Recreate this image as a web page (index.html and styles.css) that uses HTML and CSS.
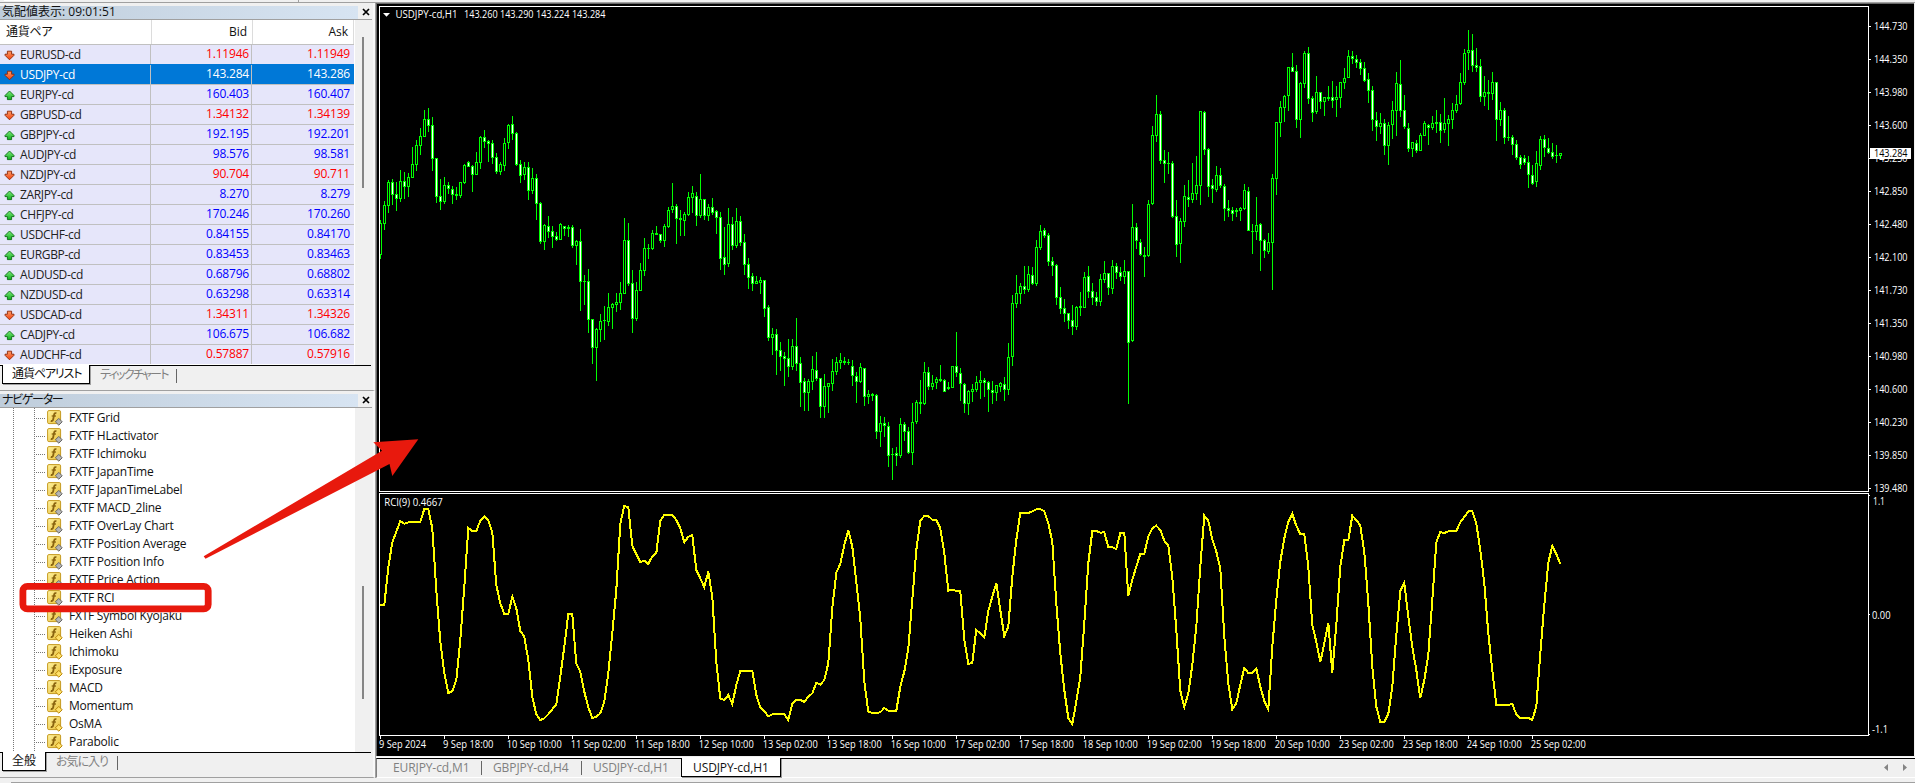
FILE: index.html
```html
<!DOCTYPE html>
<html lang="ja">
<head>
<meta charset="utf-8">
<title>USDJPY-cd,H1</title>
<link rel="stylesheet" href="styles.css">
</head>
<body>
<div class="app">
  <div class="toolbar-edge"><span class="edge-light"></span><span class="edge-split"></span></div>
  <div class="workspace">
    <aside class="sidebar">
      <section class="dock market">
        <header class="dock-title"><span class="dock-name">気配値表示: 09:01:51</span><svg class="close" viewBox="0 0 8 8"><path d="M1 1L7 7M7 1L1 7"/></svg></header>
        <div class="dock-body">
          <div class="quotes">
            <div class="quote-head"><span class="jp">通貨ペア</span><span>Bid</span><span>Ask</span></div>
            <div id="quotes"></div>
          </div>
          <div class="scroll"><i class="thumb thumb-market"></i></div>
        </div>
        <nav class="tabs"><span class="tab active tab-list">通貨ペアリスト</span><span class="tab tab-tick">ティックチャート</span></nav>
      </section>
      <section class="dock navigator">
        <header class="dock-title"><span class="dock-name nav-name">ナビゲーター</span><svg class="close" viewBox="0 0 8 8"><path d="M1 1L7 7M7 1L1 7"/></svg></header>
        <div class="dock-body">
          <div class="tree" id="tree"></div>
          <div class="scroll"><i class="thumb thumb-nav"></i></div>
        </div>
        <nav class="tabs"><span class="tab active tab-all">全般</span><span class="tab tab-fav">お気に入り</span></nav>
      </section>
    </aside>
    <main class="charts">
      <svg class="chart" id="chart" viewBox="377 4 1537 752" width="1537" height="752"></svg>
      <nav class="chart-tabs">
        <span class="ctab">EURJPY-cd,M1</span><span class="ctab">GBPJPY-cd,H4</span><span class="ctab last">USDJPY-cd,H1</span><span class="ctab current">USDJPY-cd,H1</span>
        <svg class="tab-arrows" viewBox="0 0 24 8"><path d="M4 0V7L0 3.5ZM19 0V7L23 3.5Z"/></svg>
      </nav>
    </main>
  </div>
  <div class="status-edge"></div>
  <svg class="callout" viewBox="0 0 430 783" width="430" height="783">
    <rect x="22.9" y="586.3" width="185.3" height="22.6" rx="4.5"/>
    <path d="M203.7 556.3L382 450.7L373.3 442.3L418.3 439.3L392.3 476L389.5 464L205.5 558.8Z"/>
  </svg>
</div>
<svg class="defs" width="0" height="0">
  <defs>
    <linearGradient id="gUp" x1="0" x2="0" y1="0" y2="1"><stop offset="0" stop-color="#7fe87c"/><stop offset="1" stop-color="#0fb01c"/></linearGradient>
    <linearGradient id="gDown" x1="0" x2="0" y1="0" y2="1"><stop offset="0" stop-color="#ff9a64"/><stop offset="1" stop-color="#f04010"/></linearGradient>
    <linearGradient id="gFx" x1="0" x2="1" y1="0" y2="1"><stop offset="0" stop-color="#fff3a0"/><stop offset="1" stop-color="#e9bf36"/></linearGradient>
    <symbol id="up" viewBox="0 0 12 11"><path d="M5.5 1L10 5.5V6.6H7.6V9.6H3.4V6.6H1V5.5Z" fill="url(#gUp)" stroke="#0b6b14" stroke-width=".9"/></symbol>
    <symbol id="down" viewBox="0 0 12 11"><path d="M5.5 9.8L10 5.3V4.2H7.6V1.2H3.4V4.2H1V5.3Z" fill="url(#gDown)" stroke="#8c2607" stroke-width=".9"/></symbol>
    <symbol id="fx" viewBox="0 0 16 16"><rect x=".6" y=".6" width="13" height="13" rx="1.3" fill="url(#gFx)" stroke="#c59a22"/><path d="M9.4 3.4C8.1 2.8 7.4 3.4 7.1 4.8L6.2 9.3C5.9 10.9 5.1 11.3 3.8 10.8" fill="none" stroke="#8a6410" stroke-width="1.8"/><path d="M4.7 6H9" stroke="#8a6410" stroke-width="1.3"/></symbol>
  </defs>
</svg>
<script src="app.js"></script>
</body>
</html>
```

FILE: styles.css
```css
* { box-sizing: border-box; }
body { margin: 0; background: #f0f0f0; color: #111; font: 12px "Open Sans", "Noto Sans CJK JP", sans-serif; overflow: hidden; }
.app { position: relative; width: 1915px; height: 783px; display: flex; flex-direction: column; }
.toolbar-edge { height: 3px; flex: none; display: flex; border-bottom: 1px solid #a0a0a0; }
.edge-light { width: 26px; height: 1px; margin-left: 4px; background: #fff; }
.edge-split { width: 1px; margin-left: 268px; background: #a0a0a0; }
.workspace { display: flex; height: 775px; flex: none; }

.sidebar { width: 375px; flex: none; display: flex; flex-direction: column; }
.dock { display: flex; flex-direction: column; width: 375px; border-right: 2px solid #f8f8f8; border-bottom: 1px solid #a0a0a0; }
.market { height: 388px; padding-top: 2px; }
.navigator { height: 387px; padding-top: 2px; }
.dock-title { height: 15px; flex: none; display: flex; align-items: center; justify-content: space-between; padding-right: 2px; border-bottom: 1px solid #a0a0a0; margin-right: 1px; }
.dock-name { width: 358px; height: 13px; line-height: 12px; padding-left: 2px; background: linear-gradient(90deg, #bfcddb, #d7e4f2); white-space: nowrap; }
.nav-name { font-feature-settings: "palt"; letter-spacing: -1.3px; }
.close { width: 8px; height: 8px; fill: none; stroke: #000; stroke-width: 1.7; }
.dock-body { display: flex; background: #fff; }
.market .dock-body { height: 345px; }
.navigator .dock-body { height: 344px; }
.quotes { width: 354px; }
.quote-head, .quote { display: grid; grid-template-columns: 150px 101px 103px; }
.quote-head { height: 24px; line-height: 23px; grid-template-columns: 152px 101px 101px; }
.quote-head span { border-right: 1px solid #dcdcdc; padding-right: 5px; text-align: right; }
.quote-head .jp { text-align: left; padding-left: 6px; font-feature-settings: "palt"; letter-spacing: -.3px; }
.quote { height: 20px; line-height: 17px; background: #e6e6fa; border-top: 1px solid #c0c0c0; }
.quote span { text-align: right; padding-right: 2px; border-left: 1px solid #c0c0c0; letter-spacing: -.2px; }
.quote span:last-child { padding-right: 4px; }
.quote .pair { display: flex; align-items: center; gap: 4px; padding-left: 4px; text-align: left; border: 0; letter-spacing: -.35px; }
.quote svg { width: 12px; height: 11px; margin-top: 1px; }
.rise { color: #00f; }
.fall { color: #f00; }
.pair { color: #222; }
.quote.picked { background: #0078d7; border-top-color: #0078d7; }
.picked span { color: #fff; }
.scroll { width: 18px; margin-left: 1px; background: #f0f0f0; }
.thumb { display: block; width: 2px; margin-left: 7px; background: #858585; }
.thumb-market { height: 151px; margin-top: 17px; }
.thumb-nav { height: 113px; margin-top: 178px; }
.tabs { height: 20px; margin-right: 2px; border-top: 1px solid #000; display: flex; }
.tab { color: #808080; height: 14px; margin-top: 3px; line-height: 12px; border-right: 1px solid #666; font-feature-settings: "palt"; white-space: nowrap; }
.tab.active { height: 19px; line-height: 17px; margin: -1px 0 0 2px; color: #111; background: #fff; border: 1px solid #000; border-top: 0; box-shadow: 1px 1px #a0a0a0; padding-left: 9px; }
.tab-list { width: 88px; letter-spacing: -1.1px; }
.tab-tick { width: 87px; padding-left: 10px; letter-spacing: -1.7px; }
.tab-all { width: 44px; }
.tab-fav { width: 72px; padding-left: 10px; letter-spacing: -1px; }

.tree { width: 354px; background-image: linear-gradient(#777 50%, transparent 50%), linear-gradient(#777 50%, transparent 50%); background-size: 1px 2px; background-position: 13px 0, 34px 0; background-repeat: repeat-y; }
.node { height: 18px; display: flex; align-items: center; padding-left: 34px; line-height: 17px; letter-spacing: -.24px; }
.node::before { content: ""; width: 11px; height: 1px; margin-top: 3px; background: repeating-linear-gradient(90deg, #777 0 1px, transparent 1px 2px); }
.node svg { width: 16px; height: 16px; margin: 2px 6px 0 2px; }

.charts { width: 1540px; border-left: 1px solid #a0a0a0; display: flex; flex-direction: column; }
.chart { display: block; flex: none; background: #000; border-left: 1px solid #696969; border-top: 1px solid #696969; width: 1538px; height: 753px; }
.chart-tabs { height: 21px; margin-top: 2px; border-top: 1px solid #000; border-left: 1px solid #808080; border-bottom: 1px solid #fff; display: flex; box-shadow: 0 -1px #fff; }
.ctab { color: #808080; width: 100px; height: 14px; line-height: 14px; margin-top: 2px; padding-left: 11px; border-right: 1px solid #666; letter-spacing: -.1px; white-space: nowrap; }
.ctab:first-child { width: 105px; padding-left: 16px; }
.ctab.last { border: 0; width: 99px; }
.ctab.current { margin-top: -1px; height: 19px; line-height: 19px; background: #fff; color: #111; border: 1px solid #000; border-top: 0; box-shadow: 1px 1px #999; }
.tab-arrows { width: 24px; height: 8px; margin: 5px 7px 0 auto; fill: #858585; }
.status-edge { height: 5px; margin-left: 11px; border-bottom: 1px solid #a0a0a0; }

.chart text { font: 10.5px "Open Sans", sans-serif; fill: #fff; }
.chart .now { fill: #000; }
.callout { position: absolute; left: 0; top: 0; }
.callout rect { fill: none; stroke: #e8190d; stroke-width: 6.8; }
.callout path { fill: #e8190d; }
.defs { position: absolute; }
```

FILE: app.js
```js
const quotes = `EURUSD 1.11946 1.11949 d
USDJPY 143.284 143.286 d
EURJPY 160.403 160.407 u
GBPUSD 1.34132 1.34139 d
GBPJPY 192.195 192.201 u
AUDJPY 98.576 98.581 u
NZDJPY 90.704 90.711 d
ZARJPY 8.270 8.279 u
CHFJPY 170.246 170.260 u
USDCHF 0.84155 0.84170 u
EURGBP 0.83453 0.83463 u
AUDUSD 0.68796 0.68802 u
NZDUSD 0.63298 0.63314 u
USDCAD 1.34311 1.34326 d
CADJPY 106.675 106.682 u
AUDCHF 0.57887 0.57916 d`.split('\n').map(l => l.split(' '));

document.getElementById('quotes').innerHTML = quotes.map(([pair, bid, ask, dir], i) => {
  const cls = dir === 'u' ? 'rise' : 'fall';
  return `<div class="quote ${i === 1 ? 'picked' : ''}"><span class="pair"><svg><use href="#${dir === 'u' ? 'up' : 'down'}"/></svg>${pair}-cd</span><span class="${cls}">${bid}</span><span class="${cls}">${ask}</span></div>`;
}).join('');

const nodes = ['FXTF Grid', 'FXTF HLactivator', 'FXTF Ichimoku', 'FXTF JapanTime', 'FXTF JapanTimeLabel', 'FXTF MACD_2line', 'FXTF OverLay Chart', 'FXTF Position Average', 'FXTF Position Info', 'FXTF Price Action', 'FXTF RCI', 'FXTF Symbol Kyojaku', 'Heiken Ashi', 'Ichimoku', 'iExposure', 'MACD', 'Momentum', 'OsMA', 'Parabolic'];
document.getElementById('tree').innerHTML = nodes.map(name => {
  const c = name.startsWith('FXTF') ? ['#b4b4b4', '#666'] : ['#ffe169', '#b8860b'];
  return `<div class="node"><svg viewBox="0 0 16 16"><use href="#fx"/><path d="M11.8 8.4L15.2 11.8L11.8 15.2L8.4 11.8Z" fill="${c[0]}" stroke="${c[1]}"/></svg>${name}</div>`;
}).join('');

// Candle runs: high, body top, body bottom, low, kind (0 hollow, 1 filled, 2 doji), in thirds of a pixel.
const runs = [
  [0, `660 670 763 776 0,603 617 670 689 0,541 547 616 639 0,537 547 583 614 1,546 583 596 632 1,510 544 597 605 0,516 544 560 596 1,519 532 560 590 0,441 493 532 533 0,420 436 494 513 0,384 409 437 465 0,330 358 410 410 0,324 358 377 396 1,351 376 476 513 1,475 475 590 608 1,537 589 605 630 1,531 556 605 611 0,546 556 566 582 1,558 568 584 611 1,561 583 587 600 1,547 547 587 594 0,492 496 548 551 0,483 487 499 500 1,495 499 524 576 1,456 487 524 525 0,408 412 488 507 0,390 412 425 444 1,420 424 430 486 1,420 430 472 491 1,459 472 515 521 1,487 493 515 524 0,414 430 497 513 0,372 376 428 447 0,348 373 401 420 1,396 400 494 497 1,480 493 527 549 1,486 502 524 540 0,486 502 572 600 1,504 535 572 582 0,522 535 611 660 1,606 610 725 731 1,672 676 724 750 0,648 679 695 714 1,678 694 710 744 1,696 709 719 723 1,669 673 718 718 0,678 679 685 708 1,675 683 686 711 1,675 682 737 744 1,720 724 737 795 0,687 724 845 933 1,825 844 845 915 2,807 844 959 999 1,957 959 1043 1092 1,984 988 1043 1142 0,942 964 989 1026 0,918 961 962 1020 2,879 922 964 978 0,909 913 922 987 0,879 907 913 936 0,846 880 907 930 0,654 721 881 882 0,669 721 851 858 1,810 850 956 999 1,846 871 956 963 0,789 811 871 873 0,714 745 811 828 0,732 745 746 777 2,690 700 745 749 0,678 700 704 706 1,702 703 721 729 1,672 680 721 741 0,621 631 680 684 0,549 619 628 640 0,612 619 656 732 1,630 656 658 708 1,636 643 661 708 0,576 592 644 648 0,558 580 592 640 0,576 588 647 678 1,522 598 647 654 0,597 598 647 660 1,612 622 647 663 0,594 622 638 645 1,630 634 653 702 1,636 652 776 810 1,682 772 794 825 1,624 673 791 801 0,651 673 737 750 1,624 664 737 744 0,648 664 728 738 1,702 727 794 825 1,774 793 832 867 1,819 829 851 873 1,828 844 850 852 0,831 841 848 882 0,840 841 926 951 1,915 922 1013 1022 1,984 1003 1013 1065 0`],
  [450, `537 553 603 675 1,576 601 621 663 1,606 619 627 708 1,567 625 651 681 1,567 589 651 660 0,504 589 641 663 1,621 640 699 771 1,684 694 729 783 1,687 694 728 783 0,618 658 696 720 0,606 660 687 693 1,684 685 771 804 1,672 709 770 804 0,699 700 710 789 0,627 664 702 723 0,621 637 665 675 0,609 631 638 657 0,621 634 639 645 1,627 637 638 645 2,630 649 678 708 1,666 679 696 759 1,639 652 695 699 0,654 655 741 768 1,720 733 741 762 0,729 733 738 753 1,732 736 846 867 1,798 820 846 891 0,801 820 828 861 1,816 829 918 951 1,894 912 914 990 2,891 910 918 948 1,804 823 917 924 0,816 823 846 873 1,831 844 909 912 1,759 817 908 945 0,750 757 816 822 0,690 757 762 792 1,636 667 762 765 0,651 667 711 720 1,675 700 711 720 0,681 687 699 717 0,645 688 692 696 1,687 691 726 726 1,696 712 717 720 1,648 649 713 714 0,546 649 669 681 1,654 670 702 753 1,699 703 762 789 1,720 724 762 795 0,702 718 725 756 0,678 697 719 726 0,663 691 698 747 0,684 691 699 741 1,693 697 720 786 1,693 721 729 762 1,705 706 728 753 0,696 700 710 726 0,681 703 720 753 1,579 622 720 735 0,435 460 621 648 0,375 430 461 474 0,399 409 431 462 0,348 409 420 432 1,348 373 419 426 0,351 376 402 405 1,270 292 402 408 0,225 244 293 300 0,234 241 258 264 1,249 256 336 348 1,321 334 348 378 1,342 346 444 465 1,411 442 477 492 1,447 475 492 516 1,489 490 513 537 1,465 511 531 555 1,468 472 530 540 0,426 469 473 498 1,366 382 473 474 0,348 379 426 444 1,399 424 444 465 1,426 442 456 468 1,372 388 455 468 0,333 370 389 399 0,369 370 414 435 1,330 349 416 432 0,339 349 369 387 1,351 367 381 393 1,330 364 380 402 0,363 364 579 762 1`],
  [0, `612 682 1022 1026 0,669 682 723 747 1,717 727 765 768 1,741 766 771 831 1,600 613 768 771 0,378 406 612 615 0,285 343 408 426 0,333 343 483 492 1,450 481 492 549 1,456 489 491 522 2,483 490 651 654 1,600 649 735 771 1,654 664 731 789 0,555 589 665 681 0,540 592 600 621 1,489 580 600 609 0,468 556 581 600 0,333 334 557 615 0,333 337 450 465 1,444 448 561 591 1,537 556 567 609 1,498 526 569 576 0,504 526 558 564 1,552 559 627 663 1,600 625 633 651 1,621 631 642 663 1,624 631 636 651 1,621 625 632 663 0,552 571 626 630 0,561 574 693 693 1,672 694 695 762 2,591 676 695 720 0,669 673 723 813 1,717 721 753 774 1,699 727 755 762 0,522 535 728 870 0,366 367 536 585 0,303 322 368 411 0,285 289 323 366 0,201 202 287 333 0,159 202 216 216 1,195 214 360 384 1,246 250 359 414 0,153 160 251 264 0,141 160 297 312 1,288 295 339 366 1,228 277 335 342 0,276 277 306 327 1,291 292 305 348 0,258 292 297 303 1,243 292 303 324 1,258 292 299 351 0,246 247 293 324 0,204 235 248 267 0,150 169 233 234 0,153 169 177 192 1,165 178 189 204 1,177 187 207 225 1,186 205 243 246 1,219 238 273 309 1,258 271 360 393 1,336 361 381 423 1,339 370 380 402 0,357 370 438 465 1,366 376 437 495 0,303 331 374 417 0,216 250 332 408 0,180 253 333 351 1,285 331 381 387 1,369 385 447 456 1,426 427 446 471 0,420 430 453 459 1,399 406 452 453 0,363 370 407 408 0,372 376 384 435 1,348 370 383 390 0,330 367 372 399 1,342 367 393 429 1,294 370 389 399 0,345 358 371 438 0,309 331 359 387 0,285 313 332 339 0,219 247 311 315 0,147 160 248 255 0,90 151 158 210 0,102 151 198 216 1,144 196 204 216 1,177 199 291 306 1,228 277 290 318 0,240 277 282 330 1,216 247 281 300 0,246 247 360 423 1,306 331 359 378 0,324 331 414 432 1,348 412 413 423 2,405 412 435 465 1,420 433 474 480 1,465 472 495 507 1,465 475 489 495 1,468 487 525 564 1,495 526 552 555 1,453 490 545 561 0,408 418 496 510 0,405 418 444 471 1,414 445 459 462 1,429 457 471 477 1,435 466 467 489 2,459 460 467 477 0`]
];
const rci = [375,375,262,187,155,123,131,127,126,126,126,87,87,145,330,485,580,639,634,600,480,320,144,153,153,122,110,122,157,315,370,402,402,350,385,453,470,540,650,703,720,715,703,688,673,590,500,402,402,551,575,635,682,714,710,700,665,580,460,330,132,77,82,197,223,247,242,252,229,220,122,105,104,105,120,145,187,170,165,270,295,321,275,350,545,656,660,645,672,615,573,573,573,573,645,683,694,709,703,702,702,702,720,672,660,660,666,650,640,608,614,600,550,385,278,252,195,150,200,305,415,605,695,699,699,697,684,692,693,
692,620,575,505,360,210,122,108,108,119,120,145,220,332,330,332,333,480,552,548,450,460,473,393,350,309,390,468,440,290,180,99,99,99,94,88,87,94,130,185,370,520,630,714,732,665,590,430,250,154,153,158,157,201,202,207,160,159,348,300,260,222,221,170,145,137,150,182,197,290,450,632,681,640,555,440,260,107,122,178,215,265,470,610,688,670,615,564,579,579,565,620,663,688,500,360,245,175,126,101,137,162,162,260,435,485,547,490,429,579,435,260,181,180,107,120,137,215,370,560,680,726,726,702,620,465,333,309,
410,500,570,655,600,525,360,187,156,159,154,153,153,127,111,94,93,130,210,310,460,570,675,675,675,675,672,703,714,714,714,720,680,520,375,248,198,222,252];

const rect = (x, y, w, h, fill) => `<rect x="${x}" y="${y}" width="${w}" height="${h}" fill="${fill}"/>`;
const label = (x, y, s, len, cls = '') => `<text x="${x}" y="${y}" textLength="${len}" lengthAdjust="spacingAndGlyphs" class="${cls}">${s}</text>`;
let out = '<g shape-rendering="crispEdges">';

let x = 380;
for (const [base, data] of runs) {
  for (const item of data.split(',')) {
    const [h, t, b, l, kind] = item.split(' ').map(Number);
    const high = Math.floor((h + base) / 3), low = Math.round((l + base) / 3);
    const top = Math.floor((t + base) / 3), bottom = kind === 2 ? top + 1 : Math.ceil((b + base) / 3);
    out += rect(x, high, 1, Math.max(low - high, 1), '#0f0') + rect(x - 1, top, 3, bottom - top, '#0f0');
    if (bottom - top > 2) out += rect(x, top + 1, 1, bottom - top - 2, kind ? '#fff' : '#000');
    x += 4;
  }
}
out += `<polyline fill="none" stroke="#ff0" stroke-width="2" points="${rci.map((v, i) => `${380.3 + 4 * i},${(480 + v / 3).toFixed(1)}`).join(' ')}"/>`;

// Pane frames and axis ticks
out += rect(377, 6, 2, 730, '#000');
out += rect(379, 6, 1490, 1, '#fff') + rect(379, 6, 1, 486, '#fff') + rect(1868, 6, 1, 486, '#fff') + rect(379, 491, 1490, 1, '#fff');
out += rect(379, 493, 1490, 1, '#fff') + rect(379, 493, 1, 243, '#fff') + rect(1868, 493, 1, 243, '#fff') + rect(379, 735, 1490, 1, '#fff');
for (let i = 0; i < 15; i++) out += rect(1869, 26 + 33 * i, 2, 1, '#fff');
for (let i = 0; i < 19; i++) out += rect(380 + 64 * i, 736, 1, 3, '#fff');
out += rect(1869, 495, 1, 1, '#fff') + rect(1869, 614, 1, 1, '#fff') + rect(1869, 734, 1, 1, '#fff');
out += '</g>';

['144.730', '144.350', '143.980', '143.600', '143.230', '142.850', '142.480', '142.100', '141.730', '141.350', '140.980', '140.600', '140.230', '139.850', '139.480']
  .forEach((p, i) => { out += label(1874, 30.3 + 33 * i, p, 33.5); });
out += rect(1870, 148, 41, 11, '#fff') + label(1874, 157.4, '143.284', 33.5, 'now');
out += label(1873, 504.5, '1.1', 12) + label(1872, 618.5, '0.00', 18.5) + label(1872, 732.5, '-1.1', 16);
['9 Sep 2024', '9 Sep 18:00', '10 Sep 10:00', '11 Sep 02:00', '11 Sep 18:00', '12 Sep 10:00', '13 Sep 02:00', '13 Sep 18:00', '16 Sep 10:00', '17 Sep 02:00', '17 Sep 18:00', '18 Sep 10:00', '19 Sep 02:00', '19 Sep 18:00', '20 Sep 10:00', '23 Sep 02:00', '23 Sep 18:00', '24 Sep 10:00', '25 Sep 02:00']
  .forEach((d, i) => { out += label(379 + 64 * i - (i > 1 ? 0.3 : 0), 748.4, d, i === 0 ? 47 : i === 1 ? 50.5 : 55); });
out += '<path d="M383 13H390L386.5 16.7Z" fill="#fff"/>';
out += label(395.5, 18.4, 'USDJPY-cd,H1', 62) + label(464, 18.4, '143.260 143.290 143.224 143.284', 141.5);
out += label(384.3, 506.4, 'RCI(9) 0.4667', 58.5);
document.getElementById('chart').innerHTML = out;
```
